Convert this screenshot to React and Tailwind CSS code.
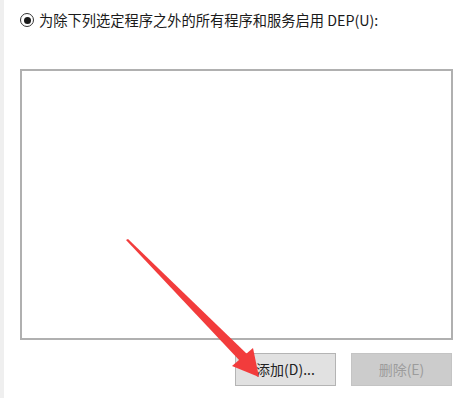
import React from "react";

export default function App() {
  const font = { fontFamily: '"Noto Sans CJK SC", "Noto Sans", sans-serif' };
  return (
    <div className="relative flex w-[474px] h-[398px] bg-white overflow-hidden" style={font}>
      <div className="w-[4px] h-full bg-[#efefef]" />
      <div className="flex flex-col pl-[16px] pt-[12px]">
        <div className="flex items-center h-[16px] gap-[5px]">
          <div className="w-[14px] h-[14px] rounded-full border-[1.5px] border-[#333333] flex items-center justify-center">
            <div className="w-[7px] h-[7px] rounded-full bg-[#1a1a1a]" />
          </div>
          <span className="text-[14.25px] leading-[16px] text-[#1a1a1a]">为除下列选定程序之外的所有程序和服务启用 DEP(U):</span>
        </div>
        <div className="mt-[41px] w-[433px] h-[271px] border-2 border-[#b0b0b0] bg-white" />
        <div className="mt-[13px] w-[433px] flex justify-end gap-[15px] pr-[1px]">
          <div className="w-[101px] h-[33px] bg-[#e1e1e1] border border-[#b4b4b4] flex items-center justify-center text-[14px] text-[#222222]">
            添加(D)...
          </div>
          <div className="w-[101px] h-[33px] bg-[#cccccc] border border-[#c4c4c4] flex items-center justify-center text-[14px] text-[#9c9c9c]">
            删除(E)
          </div>
        </div>
      </div>
      <svg className="absolute inset-0 pointer-events-none" width="474" height="398" viewBox="0 0 474 398">
        <polygon points="126,240 128,239 247,354 240,361" fill="#f23c3c" />
        <polygon points="259,377 232,366 253,348" fill="#f23c3c" />
      </svg>
    </div>
  );
}
